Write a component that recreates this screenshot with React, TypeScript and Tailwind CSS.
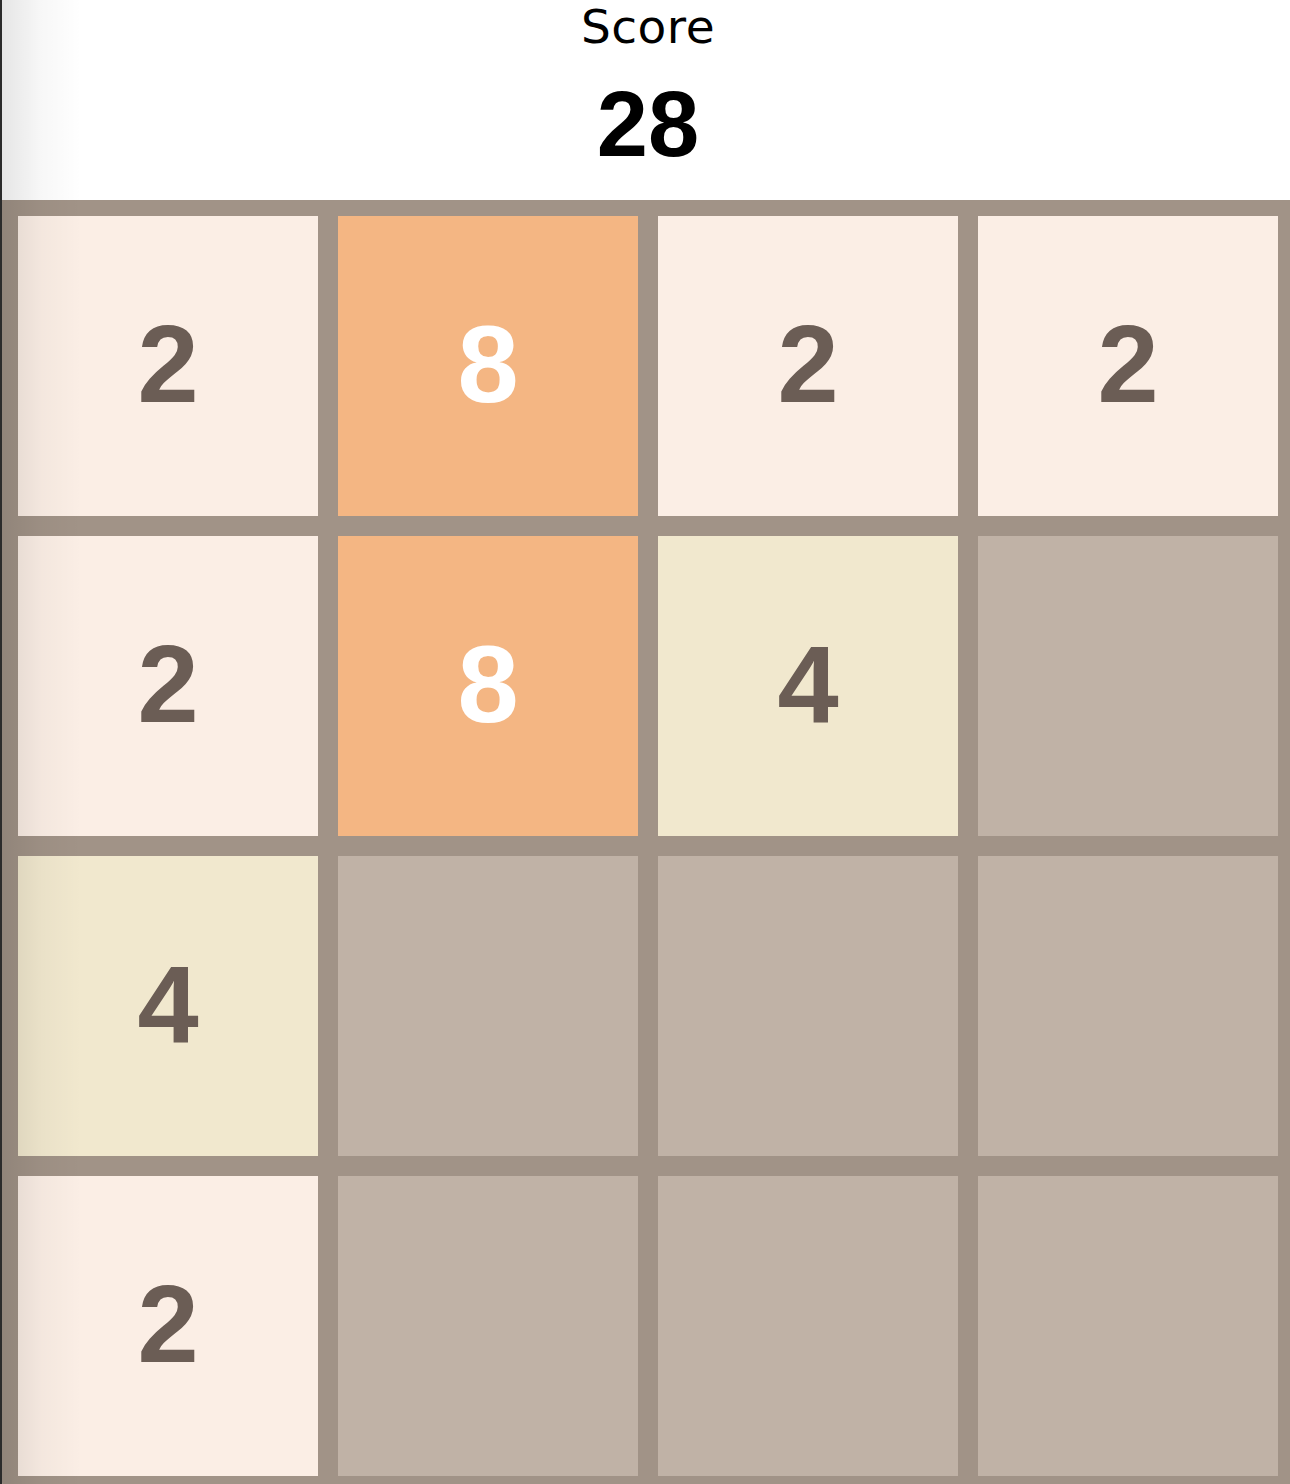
import clsx from 'clsx'

// Board state, row by row; 0 is an empty cell
const grid = [
  [2, 8, 2, 2],
  [2, 8, 4, 0],
  [4, 0, 0, 0],
  [2, 0, 0, 0],
]

const tileStyles: Record<number, string> = {
  0: 'bg-[#c0b2a6]',
  2: 'bg-[#fbeee5] text-[#6b5d55]',
  4: 'bg-[#f1e8ce] text-[#6b5d55]',
  8: 'bg-[#f4b683] text-white',
}

function Tile({ value }: { value: number }) {
  return (
    <div
      className={clsx(
        'w-[300px] h-[300px] flex items-center justify-center pb-[4px] font-bold text-[110px] leading-none',
        tileStyles[value]
      )}
    >
      {value > 0 ? value : null}
    </div>
  )
}

export default function App() {
  return (
    <div className="relative w-[1290px] h-[1484px] overflow-hidden bg-white font-['Liberation_Sans',Arial,sans-serif]">
      <div className="flex h-full">
        {/* window edge */}
        <div className="w-[2px] shrink-0 bg-[#2b2b2b]" />

        <div className="w-[1292px] shrink-0 flex flex-col">
          {/* Score */}
          <div className="h-[200px] shrink-0 flex flex-col items-center">
            <div className="text-[47px] leading-[54px] tracking-[0.5px] text-black font-['DejaVu_Sans',Verdana,sans-serif]">
              Score
            </div>
            <div className="mt-[24px] text-[92px] leading-[92px] font-bold text-black">28</div>
          </div>

          {/* Board */}
          <div className="shrink-0 bg-[#a19387] p-4 grid grid-cols-4 gap-5 rounded-bl-[10px]">
            {grid.flat().map((v, i) => (
              <Tile key={i} value={v} />
            ))}
          </div>
        </div>
      </div>

      {/* soft shadow along the left side */}
      <div className="pointer-events-none absolute inset-y-0 left-[2px] w-[80px] bg-gradient-to-r from-black/10 via-black/[0.03] to-transparent" />
    </div>
  )
}
